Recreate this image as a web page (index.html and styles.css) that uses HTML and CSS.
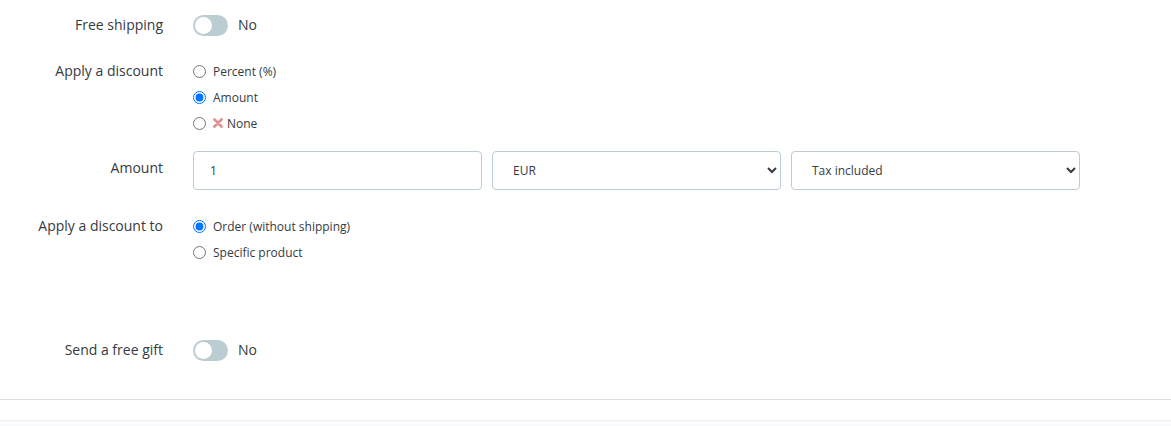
FILE: index.html
```html
<!DOCTYPE html>
<html lang="en">
<head>
    <meta charset="UTF-8" />
    <meta name="viewport" content="width=device-width, initial-scale=1.0" />
    <title>Cart rule actions</title>
    <link rel="stylesheet" href="styles.css">
</head>
<body>
    <div class="panel">
        <div class="form-row row-shipping">
            <label class="form-label">Free shipping</label>
            <div class="form-control">
                <span class="switch"><span class="knob"></span></span>
                <span class="switch-text">No</span>
            </div>
        </div>

        <div class="form-row row-discount">
            <label class="form-label label-radio">Apply a discount</label>
            <div class="form-control radio-list">
                <label class="radio"><input type="radio" name="discount" /> Percent (%)</label>
                <label class="radio"><input type="radio" name="discount" checked /> Amount</label>
                <label class="radio"><input type="radio" name="discount" />
                    <svg class="icon-none" width="10" height="10" viewBox="0 0 10 10"><path d="M1.5 1.5 L8.5 8.5 M8.5 1.5 L1.5 8.5" stroke="#e08f95" stroke-width="2.8" stroke-linecap="round"/></svg>
                    None</label>
            </div>
        </div>

        <div class="form-row row-amount">
            <label class="form-label label-input">Amount</label>
            <div class="form-control inputs">
                <input class="field" type="text" value="1" />
                <select class="field select">
                    <option>EUR</option>
                </select>
                <select class="field select">
                    <option>Tax included</option>
                    <option>Tax excluded</option>
                </select>
            </div>
        </div>

        <div class="form-row row-target">
            <label class="form-label label-radio">Apply a discount to</label>
            <div class="form-control radio-list">
                <label class="radio"><input type="radio" name="target" checked /> Order (without shipping)</label>
                <label class="radio"><input type="radio" name="target" /> Specific product</label>
            </div>
        </div>

        <div class="form-row row-gift">
            <label class="form-label">Send a free gift</label>
            <div class="form-control">
                <span class="switch"><span class="knob"></span></span>
                <span class="switch-text">No</span>
            </div>
        </div>
    </div>
    <div class="panel-footer"></div>
</body>
</html>
```

FILE: styles.css
```css
* {
    box-sizing: border-box;
    margin: 0;
    padding: 0;
}

body {
    font-family: "Open Sans", "Liberation Sans", sans-serif;
    color: #363a41;
    background: #fafbfc;
}

.panel {
    background: #fff;
    padding-top: 14px;
    padding-bottom: 38px;
    border-bottom: 1px solid #dddddd;
}

.panel-footer {
    height: 21px;
    background: #fff;
    border-bottom: 1px solid #eeeeee;
}

.form-row {
    display: flex;
    gap: 30px;
}

.form-label {
    width: 163px;
    flex-shrink: 0;
    text-align: right;
    font-size: 14px;
    line-height: 22px;
}

.label-radio {
    line-height: 26px;
}

.label-input {
    padding-top: 6px;
}

.form-control {
    display: flex;
    align-items: center;
}

.row-discount {
    margin-top: 22px;
}

.row-amount {
    margin-top: 15px;
}

.row-target {
    margin-top: 23px;
}

.row-gift {
    margin-top: 74px;
}

.switch {
    position: relative;
    width: 35px;
    height: 21px;
    border-radius: 11px;
    background: #bbcdd2;
}

.knob {
    position: absolute;
    top: 2px;
    left: 2px;
    width: 17px;
    height: 17px;
    border-radius: 50%;
    background: #fff;
}

.switch-text {
    margin-left: 10px;
    font-size: 14px;
    line-height: 22px;
}

.radio-list {
    flex-direction: column;
    align-items: flex-start;
}

.radio {
    display: flex;
    align-items: center;
    height: 26px;
    font-size: 12px;
}

.radio input {
    width: 13px;
    height: 13px;
    margin: 0 7px 0 0;
}

.icon-none {
    margin-right: 4px;
}

.inputs {
    align-items: flex-start;
    gap: 10px;
}

.field {
    width: 289px;
    height: 39px;
    border: 1px solid #bbcdd2;
    border-radius: 4px;
    background: #fff;
    font-family: "Open Sans", "Liberation Sans", sans-serif;
    font-size: 12px;
    color: #363a41;
    padding: 0 16px;
}

.select {
    padding: 0 16px;
}
```
